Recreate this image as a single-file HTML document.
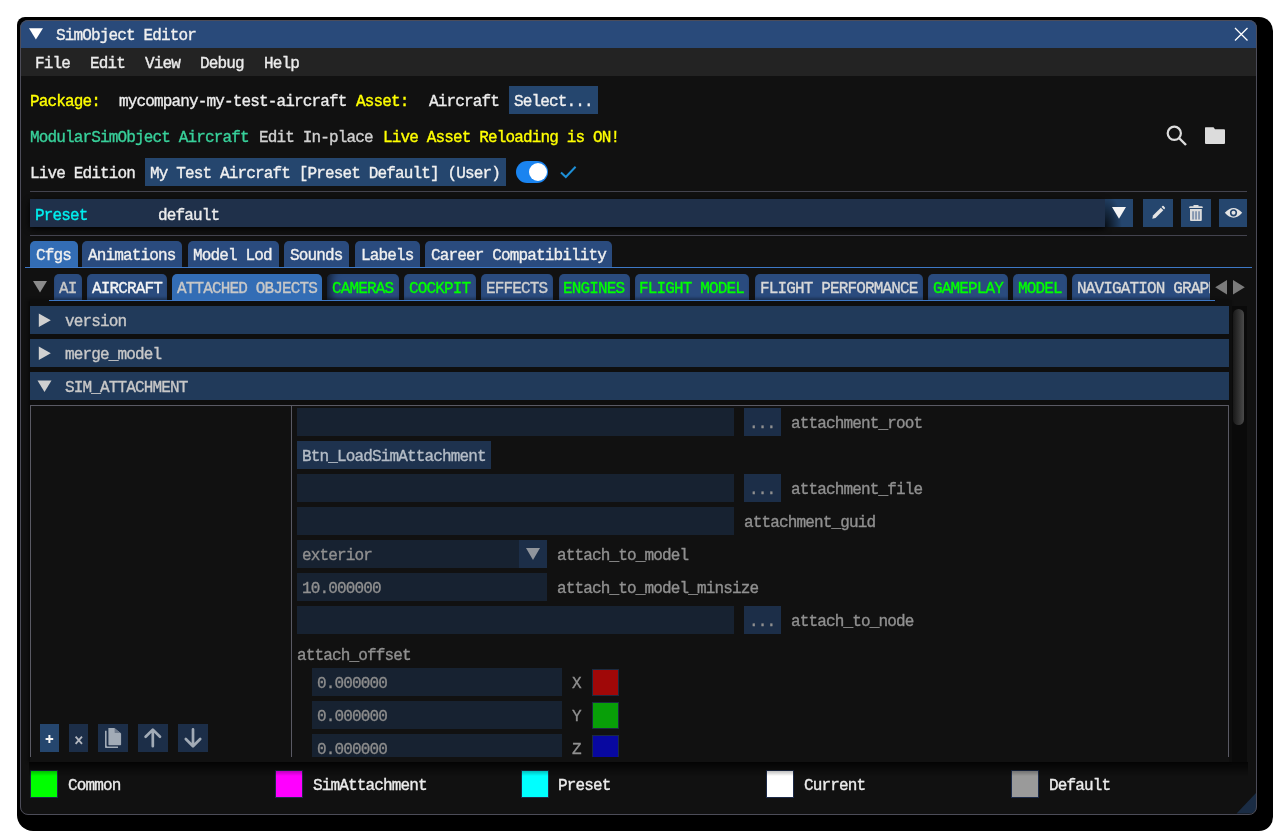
<!DOCTYPE html>
<html><head><meta charset="utf-8"><style>
html,body{margin:0;padding:0;background:#fff;width:1277px;height:835px;overflow:hidden}
body div, body svg{position:absolute}
.t{font-family:"Liberation Mono",monospace;font-size:16px;letter-spacing:-0.852px;line-height:20px;white-space:pre;-webkit-text-stroke:0.35px currentColor;will-change:transform}
</style></head><body>
<div style="left:17px;top:17px;width:1256px;height:813.5px;background:#000;border-radius:8px 14px 14px 16px;"></div>
<div style="left:20px;top:20px;width:1237px;height:795px;background:#111111;border-radius:8px;"></div>
<div style="left:20px;top:20px;width:1237px;height:28px;background:#294a7a;border-radius:8px 8px 0 0;"></div>
<svg style="left:29px;top:28px" width="15" height="12"><path d="M0 0.2 L14 0.2 L6.9 11.6 Z" fill="#fff"/></svg>
<div class="t" style="left:55.50px;top:26.24px;color:#f0f0f0;">SimObject Editor</div>
<svg style="left:1234px;top:27px" width="15" height="15"><path d="M1 1 L13.5 13.5 M13.5 1 L1 13.5" stroke="#fff" stroke-width="1.3"/></svg>
<div style="left:21px;top:48px;width:1235px;height:28px;background:#232323;"></div>
<div class="t" style="left:35.00px;top:53.74px;color:#ececec;">File</div>
<div class="t" style="left:90.00px;top:53.74px;color:#ececec;">Edit</div>
<div class="t" style="left:144.80px;top:53.74px;color:#ececec;">View</div>
<div class="t" style="left:199.80px;top:53.74px;color:#ececec;">Debug</div>
<div class="t" style="left:263.80px;top:53.74px;color:#ececec;">Help</div>
<div class="t" style="left:29.50px;top:92.34px;color:#ffff00;">Package:</div>
<div class="t" style="left:118.50px;top:92.34px;color:#ececec;">mycompany-my-test-aircraft</div>
<div class="t" style="left:356.00px;top:92.34px;color:#ffff00;">Asset:</div>
<div class="t" style="left:429.00px;top:92.34px;color:#ececec;">Aircraft</div>
<div style="left:509px;top:86px;width:89px;height:28px;background:#25466e;"></div>
<div class="t" style="left:513.50px;top:92.34px;color:#f0f0f0;">Select...</div>
<div class="t" style="left:29.50px;top:128.04px;color:#38d09a;">ModularSimObject Aircraft</div>
<div class="t" style="left:259.00px;top:128.04px;color:#d0d0d0;">Edit In-place</div>
<div class="t" style="left:382.50px;top:128.04px;color:#ffff00;">Live Asset Reloading is ON!</div>
<svg style="left:1163px;top:122px" width="28" height="28"><circle cx="11.3" cy="11.3" r="6.6" fill="none" stroke="#dcdcdc" stroke-width="2.2"/><path d="M16 16 L23 23" stroke="#dcdcdc" stroke-width="2.4"/></svg>
<svg style="left:1204px;top:126px" width="24" height="20"><path d="M1.5 1.2 H9.5 L11 3.2 H20 Q21 3.2 21 4.2 V17 Q21 18 20 18 H2 Q1 18 1 17 V2 Q1 1.2 1.5 1.2Z" fill="#dcdcdc"/></svg>
<div class="t" style="left:29.50px;top:164.04px;color:#ececec;">Live Edition</div>
<div style="left:145px;top:158px;width:361px;height:28px;background:#25466e;"></div>
<div class="t" style="left:150.00px;top:164.04px;color:#f0f0f0;">My Test Aircraft [Preset Default] (User)</div>
<div style="left:516px;top:161px;width:32px;height:21.5px;background:#1a84f0;border-radius:11px;"></div>
<div style="left:528.8px;top:163px;width:18px;height:18px;border-radius:50%;background:#fff"></div>
<svg style="left:558px;top:163px" width="20" height="16"><path d="M3 9.5 L7.8 14 L17.6 3.8" fill="none" stroke="#1e8fd6" stroke-width="2"/></svg>
<div style="left:30px;top:191px;width:1217px;height:1px;background:#43434e;"></div>
<div style="left:30px;top:199px;width:1075px;height:28px;background:#1f304a;box-shadow:0 2px 6px rgba(0,0,0,0.95);"></div>
<div style="left:1105px;top:199px;width:28px;height:28px;background:#25466e;"></div>
<div style="left:1105px;top:199px;width:20px;height:28px;background:radial-gradient(ellipse 17px 34px at 0 100%,rgba(0,0,0,0.8),rgba(0,0,0,0))"></div>
<svg style="left:1112px;top:207px" width="15" height="13"><path d="M0 0 L14 0 L7 11.8 Z" fill="#f4f4f4"/></svg>
<div class="t" style="left:34.50px;top:206.14px;color:#00f0f0;">Preset</div>
<div class="t" style="left:158.00px;top:206.14px;color:#ececec;">default</div>
<div style="left:1143px;top:199px;width:30px;height:28px;background:#25466e;"></div>
<div style="left:1181px;top:199px;width:30px;height:28px;background:#25466e;"></div>
<div style="left:1219px;top:199px;width:28px;height:28px;background:#25466e;"></div>
<svg style="left:1150px;top:205px" width="16" height="16"><path d="M2.3 13.7 L3 10.5 L10.8 2.7 L13.3 5.2 L5.5 13 Z" fill="#e4e4e4"/><path d="M11.6 1.9 L12.4 1.1 Q13 0.6 13.6 1.1 L14.9 2.4 Q15.4 3 14.9 3.6 L14.1 4.4 Z" fill="#e4e4e4"/></svg>
<svg style="left:1181px;top:199px" width="30" height="28"><path d="M8.1 8.6 Q8.1 7.2 9.5 7.2 H20.5 Q21.8 7.2 21.8 8.6 V9 H8.1 Z M12.5 6 H17.5 V7.2 H12.5 Z" fill="#dcdcdc"/><path d="M9 10 H20.8 V21 Q20.8 22 19.8 22 H10 Q9 22 9 21 Z" fill="#dcdcdc"/><path d="M11.1 12.2 H13.1 V20.4 H11.1 Z M14.1 12.2 H16 V20.4 H14.1 Z M17.1 12.2 H19 V20.4 H17.1 Z" fill="#8597b0"/></svg>
<svg style="left:1224px;top:206px" width="19" height="14"><path d="M0.8 6.8 Q9.5 -3 18.2 6.8 Q9.5 16.6 0.8 6.8Z" fill="#e4e4e4"/><circle cx="9.5" cy="6.8" r="3.6" fill="#25466e"/><circle cx="9.5" cy="6.8" r="2" fill="#e4e4e4"/></svg>
<div style="left:30px;top:235px;width:1217px;height:1px;background:#43434e;"></div>
<div style="left:30px;top:300px;width:1202px;height:462px;background:#0e0e0e;box-shadow:-2px 0 3px rgba(0,0,0,0.45);"></div>
<div style="left:30px;top:241px;width:47.5px;height:26px;background:#336db5;border-radius:5px 5px 0 0;"></div>
<div class="t" style="left:35.50px;top:246.04px;color:#f0f0f0;">Cfgs</div>
<div style="left:82px;top:241px;width:100.4px;height:26px;background:#2a4b7e;border-radius:5px 5px 0 0;"></div>
<div class="t" style="left:87.50px;top:246.04px;color:#f0f0f0;">Animations</div>
<div style="left:187.6px;top:241px;width:91.6px;height:26px;background:#2a4b7e;border-radius:5px 5px 0 0;"></div>
<div class="t" style="left:193.10px;top:246.04px;color:#f0f0f0;">Model Lod</div>
<div style="left:284px;top:241px;width:64.8px;height:26px;background:#2a4b7e;border-radius:5px 5px 0 0;"></div>
<div class="t" style="left:289.50px;top:246.04px;color:#f0f0f0;">Sounds</div>
<div style="left:355px;top:241px;width:65.2px;height:26px;background:#2a4b7e;border-radius:5px 5px 0 0;"></div>
<div class="t" style="left:360.50px;top:246.04px;color:#f0f0f0;">Labels</div>
<div style="left:425.3px;top:241px;width:187.2px;height:26px;background:#2a4b7e;border-radius:5px 5px 0 0;"></div>
<div class="t" style="left:430.80px;top:246.04px;color:#f0f0f0;">Career Compatibility</div>
<div style="left:25px;top:266.8px;width:1227px;height:1.5px;background:#3d78c6;"></div>
<svg style="left:33px;top:281px" width="15" height="12"><path d="M0 0 L14 0 L7 11.5 Z" fill="#8a8a8a"/></svg>
<div style="left:0;top:0;width:1210px;height:835px;overflow:hidden">
<div style="left:54px;top:274px;width:27.7px;height:26px;background:#2a4b7e;border-radius:5px 5px 0 0;box-shadow:inset 0 -3px 3px -1px rgba(0,0,0,0.35);"></div>
<div class="t" style="left:58.50px;top:279.04px;color:#c8c8c8;">AI</div>
<div style="left:87px;top:274px;width:80px;height:26px;background:#2a4b7e;border-radius:5px 5px 0 0;box-shadow:inset 0 -3px 3px -1px rgba(0,0,0,0.35);"></div>
<div class="t" style="left:91.50px;top:279.04px;color:#f4f4f4;">AIRCRAFT</div>
<div style="left:172px;top:274px;width:149.7px;height:26px;background:#336db5;border-radius:5px 5px 0 0;"></div>
<div class="t" style="left:176.50px;top:279.04px;color:#c8c8c8;">ATTACHED OBJECTS</div>
<div style="left:327.3px;top:274px;width:71.4px;height:26px;background:#2a4b7e;border-radius:5px 5px 0 0;box-shadow:inset 0 -3px 3px -1px rgba(0,0,0,0.35),inset 9px -2px 8px -5px rgba(0,0,0,0.6);"></div>
<div class="t" style="left:331.80px;top:279.04px;color:#00ff00;">CAMERAS</div>
<div style="left:404.4px;top:274px;width:71.4px;height:26px;background:#2a4b7e;border-radius:5px 5px 0 0;box-shadow:inset 0 -3px 3px -1px rgba(0,0,0,0.35);"></div>
<div class="t" style="left:408.90px;top:279.04px;color:#00ff00;">COCKPIT</div>
<div style="left:481.4px;top:274px;width:71.5px;height:26px;background:#2a4b7e;border-radius:5px 5px 0 0;box-shadow:inset 0 -3px 3px -1px rgba(0,0,0,0.35);"></div>
<div class="t" style="left:485.90px;top:279.04px;color:#cfcfcf;">EFFECTS</div>
<div style="left:558.5px;top:274px;width:71.5px;height:26px;background:#2a4b7e;border-radius:5px 5px 0 0;box-shadow:inset 0 -3px 3px -1px rgba(0,0,0,0.35);"></div>
<div class="t" style="left:563.00px;top:279.04px;color:#00ff00;">ENGINES</div>
<div style="left:634.9px;top:274px;width:114.6px;height:26px;background:#2a4b7e;border-radius:5px 5px 0 0;box-shadow:inset 0 -3px 3px -1px rgba(0,0,0,0.35);"></div>
<div class="t" style="left:639.40px;top:279.04px;color:#00ff00;">FLIGHT MODEL</div>
<div style="left:755.4px;top:274px;width:167.6px;height:26px;background:#2a4b7e;border-radius:5px 5px 0 0;box-shadow:inset 0 -3px 3px -1px rgba(0,0,0,0.35);"></div>
<div class="t" style="left:759.90px;top:279.04px;color:#d8d8d8;">FLIGHT PERFORMANCE</div>
<div style="left:928px;top:274px;width:79.9px;height:26px;background:#2a4b7e;border-radius:5px 5px 0 0;box-shadow:inset 0 -3px 3px -1px rgba(0,0,0,0.35);"></div>
<div class="t" style="left:932.50px;top:279.04px;color:#00ff00;">GAMEPLAY</div>
<div style="left:1013.2px;top:274px;width:53.8px;height:26px;background:#2a4b7e;border-radius:5px 5px 0 0;box-shadow:inset 0 -3px 3px -1px rgba(0,0,0,0.35);"></div>
<div class="t" style="left:1017.70px;top:279.04px;color:#00ff00;">MODEL</div>
<div style="left:1072.3px;top:274px;width:160px;height:26px;background:#2a4b7e;border-radius:5px 5px 0 0;box-shadow:inset 0 -3px 3px -1px rgba(0,0,0,0.35);"></div>
<div class="t" style="left:1076.80px;top:279.04px;color:#d8d8d8;">NAVIGATION GRAPH</div>
</div>
<div style="left:49px;top:300px;width:1166px;height:1.2px;background:#3d78c6;"></div>
<svg style="left:1215px;top:279.8px" width="32" height="15"><path d="M0.2 7.2 L12 0 L12 14.4 Z" fill="#7b7b7b"/><path d="M18 0 L29.8 7.2 L18 14.4 Z" fill="#7b7b7b"/></svg>
<div style="left:30px;top:306px;width:1199px;height:28px;background:#213a5a;"></div>
<svg style="left:38px;top:313px" width="14" height="15"><path d="M0.8 0.5 L12.8 7.3 L0.8 14 Z" fill="#d0d0d0"/></svg>
<div class="t" style="left:65.00px;top:312.04px;color:#c8c8c8;">version</div>
<div style="left:30px;top:339px;width:1199px;height:28px;background:#213a5a;"></div>
<svg style="left:38px;top:346px" width="14" height="15"><path d="M0.8 0.5 L12.8 7.3 L0.8 14 Z" fill="#d0d0d0"/></svg>
<div class="t" style="left:65.00px;top:345.04px;color:#c8c8c8;">merge_model</div>
<div style="left:30px;top:372px;width:1199px;height:28px;background:#213a5a;"></div>
<svg style="left:37px;top:380px" width="16" height="13"><path d="M0.5 0.5 L14.5 0.5 L7.5 12 Z" fill="#d0d0d0"/></svg>
<div class="t" style="left:65.00px;top:378.04px;color:#c8c8c8;">SIM_ATTACHMENT</div>
<div style="left:1232px;top:306px;width:15px;height:456px;background:#0a0a0a;"></div>
<div style="left:1232.7px;top:309px;width:11.3px;height:116px;background:#444;border-radius:5.6px;background:linear-gradient(90deg,#191919,#333 55%,#4a4a4a);"></div>
<div style="left:30px;top:405px;width:1199px;height:357px;background:#111111;"></div>
<div style="left:30px;top:405px;width:1199px;height:1px;background:#5a5a64;"></div>
<div style="left:30px;top:405px;width:1px;height:352px;background:#5a5a64;"></div>
<div style="left:1228px;top:405px;width:1px;height:352px;background:#5a5a64;"></div>
<div style="left:291px;top:406px;width:1px;height:351px;background:#5a5a64;"></div>
<div style="left:297px;top:408px;width:437px;height:28px;background:#172231;"></div>
<div style="left:744px;top:408px;width:37px;height:28px;background:#1c2e48;"></div>
<div class="t" style="left:748.50px;top:414.04px;color:#909090;">...</div>
<div class="t" style="left:790.50px;top:414.04px;color:#909090;">attachment_root</div>
<div style="left:297px;top:441px;width:194px;height:28px;background:#1e324e;"></div>
<div class="t" style="left:301.50px;top:447.04px;color:#b4bcc6;">Btn_LoadSimAttachment</div>
<div style="left:297px;top:474px;width:437px;height:28px;background:#172231;"></div>
<div style="left:744px;top:474px;width:37px;height:28px;background:#1c2e48;"></div>
<div class="t" style="left:748.50px;top:480.04px;color:#909090;">...</div>
<div class="t" style="left:790.50px;top:480.04px;color:#909090;">attachment_file</div>
<div style="left:297px;top:507px;width:437px;height:28px;background:#172231;"></div>
<div class="t" style="left:744.00px;top:513.04px;color:#909090;">attachment_guid</div>
<div style="left:297px;top:540px;width:250px;height:28px;background:#172231;"></div>
<div style="left:519px;top:540px;width:28px;height:28px;background:#1c2e48;"></div>
<svg style="left:526px;top:548px" width="15" height="13"><path d="M0 0 L14 0 L7 12 Z" fill="#90959c"/></svg>
<div class="t" style="left:301.50px;top:546.04px;color:#909090;">exterior</div>
<div class="t" style="left:556.50px;top:546.04px;color:#909090;">attach_to_model</div>
<div style="left:297px;top:573px;width:250px;height:28px;background:#172231;"></div>
<div class="t" style="left:301.50px;top:579.04px;color:#909090;">10.000000</div>
<div class="t" style="left:556.50px;top:579.04px;color:#909090;">attach_to_model_minsize</div>
<div style="left:297px;top:606px;width:437px;height:28px;background:#172231;"></div>
<div style="left:744px;top:606px;width:37px;height:28px;background:#1c2e48;"></div>
<div class="t" style="left:748.50px;top:612.04px;color:#909090;">...</div>
<div class="t" style="left:790.50px;top:612.04px;color:#909090;">attach_to_node</div>
<div class="t" style="left:296.50px;top:645.54px;color:#909090;">attach_offset</div>
<div style="left:312px;top:668px;width:250px;height:28px;background:#172231;"></div>
<div class="t" style="left:316.50px;top:674.04px;color:#8c8c8c;">0.000000</div>
<div class="t" style="left:572.30px;top:674.04px;color:#909090;">X</div>
<div style="left:592.5px;top:669.5px;width:25px;height:25px;background:#a00808;box-shadow:0 0 0 1px #1c2a40;"></div>
<div style="left:312px;top:701px;width:250px;height:28px;background:#172231;"></div>
<div class="t" style="left:316.50px;top:707.04px;color:#8c8c8c;">0.000000</div>
<div class="t" style="left:572.30px;top:707.04px;color:#909090;">Y</div>
<div style="left:592.5px;top:702.5px;width:25px;height:25px;background:#089f08;box-shadow:0 0 0 1px #1c2a40;"></div>
<div style="left:312px;top:734px;width:250px;height:28px;background:#172231;"></div>
<div class="t" style="left:316.50px;top:740.04px;color:#8c8c8c;">0.000000</div>
<div class="t" style="left:572.30px;top:740.04px;color:#909090;">Z</div>
<div style="left:592.5px;top:735.5px;width:25px;height:25px;background:#0808a0;box-shadow:0 0 0 1px #1c2a40;"></div>
<div style="left:292px;top:757px;width:937px;height:5px;background:#111111;"></div>
<div style="left:40px;top:724px;width:19px;height:28px;background:#25466e;"></div>
<svg style="left:40px;top:724px" width="19" height="28"><path d="M9.4 11 V19 M5.6 15 H13.2" stroke="#f4f4f4" stroke-width="2"/></svg>
<div style="left:69px;top:724px;width:19px;height:28px;background:#1c2e48;"></div>
<svg style="left:69px;top:724px" width="19" height="28"><path d="M6.6 12.6 L13 19.8 M13 12.6 L6.6 19.8" stroke="#b4b8c0" stroke-width="1.8"/></svg>
<div style="left:98px;top:724px;width:30px;height:28px;background:#1c2e48;"></div>
<svg style="left:98px;top:724px" width="30" height="28"><path d="M7 6.8 H8.6 V21.6 Q8.6 22.4 9.4 22.4 H20 V24 H7.8 Q7 24 7 23.2 Z" fill="#a2abb6"/><path d="M10.4 3.9 H16.4 L23.1 9.6 V20.4 Q23.1 21.2 22.3 21.2 H11.2 Q10.4 21.2 10.4 20.4 Z" fill="#a2abb6"/><path d="M16.6 4.3 V8.2 Q16.6 9.1 17.5 9.1 H22.5 Z" fill="#6f7b8c"/></svg>
<div style="left:138px;top:724px;width:30px;height:28px;background:#1c2e48;"></div>
<svg style="left:138px;top:724px" width="30" height="28"><path d="M14.8 6 V22.2 M7.6 12.8 L14.8 5.6 L22 12.8" fill="none" stroke="#a2abb6" stroke-width="2.7" stroke-linecap="round" stroke-linejoin="round"/></svg>
<div style="left:178px;top:724px;width:30px;height:28px;background:#1c2e48;"></div>
<svg style="left:178px;top:724px" width="30" height="28"><path d="M15 5.4 V22 M7.8 15 L15 22.2 L22.2 15" fill="none" stroke="#a2abb6" stroke-width="2.7" stroke-linecap="round" stroke-linejoin="round"/></svg>
<div style="left:31.0px;top:771px;width:26px;height:26px;background:#00ff00;box-shadow:0 0 0 1px #1c2a48;"></div>
<div class="t" style="left:67.80px;top:776.34px;color:#ececec;">Common</div>
<div style="left:276.3px;top:771px;width:26px;height:26px;background:#ff00ff;box-shadow:0 0 0 1px #1c2a48;"></div>
<div class="t" style="left:313.10px;top:776.34px;color:#ececec;">SimAttachment</div>
<div style="left:521.6px;top:771px;width:26px;height:26px;background:#00ffff;box-shadow:0 0 0 1px #1c2a48;"></div>
<div class="t" style="left:558.40px;top:776.34px;color:#ececec;">Preset</div>
<div style="left:766.9000000000001px;top:771px;width:26px;height:26px;background:#ffffff;box-shadow:0 0 0 1px #1c2a48;"></div>
<div class="t" style="left:803.70px;top:776.34px;color:#ececec;">Current</div>
<div style="left:1012.2px;top:771px;width:26px;height:26px;background:#9a9a9a;box-shadow:0 0 0 1px #1c2a48;"></div>
<div class="t" style="left:1049.00px;top:776.34px;color:#ececec;">Default</div>
<div style="left:29px;top:762px;width:1219px;height:14px;background:linear-gradient(180deg,rgba(0,0,0,0.7),rgba(0,0,0,0))"></div>
<svg style="left:1236px;top:792px" width="21" height="22"><path d="M20.5 0.5 V14.5 Q20.5 21.5 13.5 21.5 H0.5 Z" fill="#1a2c44"/></svg>
<div style="left:20px;top:20px;width:1235px;height:793px;border:1px solid #4c4c58;border-radius:8px;"></div>
</body></html>
